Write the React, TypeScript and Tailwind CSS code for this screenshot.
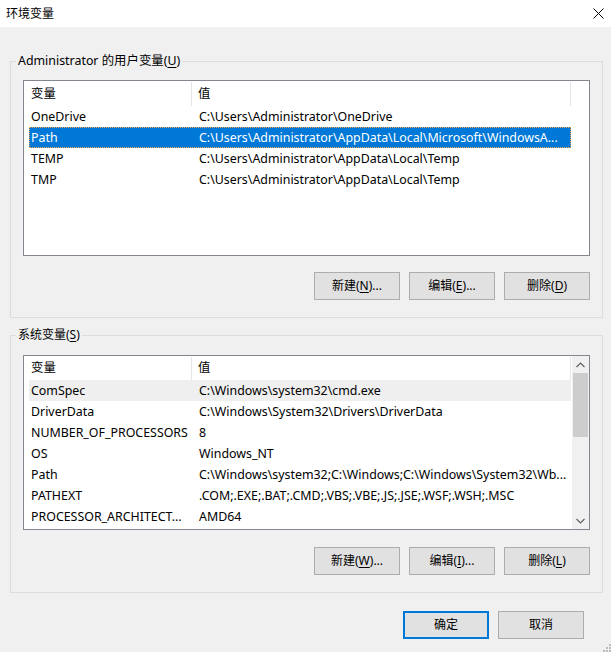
import React from "react";

type Row = { name: string; value: string };

const userVars: Row[] = [
  { name: "OneDrive", value: "C:\\Users\\Administrator\\OneDrive" },
  { name: "Path", value: "C:\\Users\\Administrator\\AppData\\Local\\Microsoft\\WindowsA..." },
  { name: "TEMP", value: "C:\\Users\\Administrator\\AppData\\Local\\Temp" },
  { name: "TMP", value: "C:\\Users\\Administrator\\AppData\\Local\\Temp" },
];

const sysVars: Row[] = [
  { name: "ComSpec", value: "C:\\Windows\\system32\\cmd.exe" },
  { name: "DriverData", value: "C:\\Windows\\System32\\Drivers\\DriverData" },
  { name: "NUMBER_OF_PROCESSORS", value: "8" },
  { name: "OS", value: "Windows_NT" },
  { name: "Path", value: "C:\\Windows\\system32;C:\\Windows;C:\\Windows\\System32\\Wb..." },
  { name: "PATHEXT", value: ".COM;.EXE;.BAT;.CMD;.VBS;.VBE;.JS;.JSE;.WSF;.WSH;.MSC" },
  { name: "PROCESSOR_ARCHITECT...", value: "AMD64" },
];

function Btn({ label, hot, tail, primary }: { label: string; hot?: string; tail?: string; primary?: boolean }) {
  return (
    <button
      className={
        primary
          ? "w-[86px] h-[28px] border-2 border-[#0078d7] bg-[#e1e1e1] text-[12px] leading-none text-black"
          : "w-[86px] h-[28px] border border-[#adadad] bg-[#e1e1e1] text-[12px] leading-none text-black"
      }
    >
      {label}
      {hot && (
        <>
          (<span className="underline underline-offset-2">{hot}</span>){tail}
        </>
      )}
    </button>
  );
}

function ListView({
  rows,
  selected,
  hover,
  headerH,
  scroll,
  height,
}: {
  rows: Row[];
  selected?: number;
  hover?: number;
  headerH: string;
  scroll?: boolean;
  height: string;
}) {
  return (
    <div className={`flex border border-[#828790] bg-white text-[12.4px] ${height}`}>
      <div className="flex-1 min-w-0 pl-[5px]">
        <div className={`flex w-[542px] ${headerH}`}>
          <div className="w-[163px] pl-[2px] flex items-center border-r border-[#e5e5e5] mt-[1px]">变量</div>
          <div className="flex-1 pl-[6px] flex items-center border-r border-[#e5e5e5] mt-[1px]">值</div>
        </div>
        {rows.map((r, i) => {
          const sel = i === selected;
          const hov = i === hover;
          return (
            <div
              key={r.name}
              className={
                sel
                  ? "flex w-[542px] h-[21px] pt-[2px] items-center bg-[#0078d7] text-white outline outline-1 outline-dotted outline-[#f7a34b] -outline-offset-1"
                  : hov
                    ? "flex w-[542px] h-[21px] pt-[2px] items-center bg-[#efefef]"
                    : "flex w-[542px] h-[21px] pt-[2px] items-center"
              }
            >
              <div className="w-[168px] pl-[2px] whitespace-nowrap overflow-hidden">{r.name}</div>
              <div className="flex-1 pl-[2px] whitespace-nowrap overflow-hidden">{r.value}</div>
            </div>
          );
        })}
      </div>
      {scroll && (
        <div className="w-[17px] bg-[#f0f0f0] flex flex-col">
          <div className="h-[17px] flex items-center justify-center">
            <svg width="9" height="6" viewBox="0 0 9 6">
              <path d="M0.5 5 L4.5 1 L8.5 5" stroke="#606060" strokeWidth="1.2" fill="none" />
            </svg>
          </div>
          <div className="h-[64px] mx-[1px] bg-[#cdcdcd]" />
          <div className="flex-1" />
          <div className="h-[17px] flex items-center justify-center">
            <svg width="9" height="6" viewBox="0 0 9 6">
              <path d="M0.5 1 L4.5 5 L8.5 1" stroke="#606060" strokeWidth="1.2" fill="none" />
            </svg>
          </div>
        </div>
      )}
    </div>
  );
}

export default function App() {
  return (
    <div
      className="relative w-[611px] h-[652px] bg-[#f0f0f0] text-[12px] text-black flex flex-col overflow-hidden"
      style={{ fontFamily: '"Noto Sans", "Noto Sans CJK SC", sans-serif' }}
    >
      {/* title bar */}
      <div className="h-[27px] bg-white flex items-center justify-between pl-[6px] pr-[7px]">
        <span>环境变量</span>
        <svg width="11" height="11" viewBox="0 0 11 11">
          <path d="M0.5 0.5 L10.5 10.5 M10.5 0.5 L0.5 10.5" stroke="#000" strokeWidth="1" />
        </svg>
      </div>

      <div className="pl-[10px] pr-[8px]">
        {/* user vars */}
        <div className="mt-[34px] border border-[#dcdcdc] px-[12px] pb-[17px]">
          <div className="-mt-[9px] ml-[-7px] w-fit px-[2px] bg-[#f0f0f0] leading-[16px] text-[12.4px]">
            Administrator 的用户变量(<span className="underline underline-offset-2">U</span>)
          </div>
          <div className="mt-[11px]">
            <ListView rows={userVars} selected={1} headerH="h-[25px]" height="h-[176px]" />
          </div>
          <div className="mt-[16px] flex justify-end gap-[9px]">
            <Btn label="新建" hot="N" tail="..." />
            <Btn label="编辑" hot="E" tail="..." />
            <Btn label="删除" hot="D" />
          </div>
        </div>

        {/* system vars */}
        <div className="mt-[17px] border border-[#dcdcdc] px-[12px] pb-[17px]">
          <div className="-mt-[9px] ml-[-7px] w-fit px-[2px] bg-[#f0f0f0] leading-[16px]">
            系统变量(<span className="underline underline-offset-2">S</span>)
          </div>
          <div className="mt-[12px]">
            <ListView rows={sysVars} hover={0} headerH="h-[24px]" scroll height="h-[175px]" />
          </div>
          <div className="mt-[17px] flex justify-end gap-[9px]">
            <Btn label="新建" hot="W" tail="..." />
            <Btn label="编辑" hot="I" tail="..." />
            <Btn label="删除" hot="L" />
          </div>
        </div>
      </div>

      <div className="mt-[18px] pr-[27px] flex justify-end gap-[9px]">
        <Btn label="确定" primary />
        <Btn label="取消" />
      </div>

      {/* size grip */}
      <svg className="absolute right-0 bottom-0" width="10" height="10" viewBox="0 0 10 10">
        <rect x="8" y="2" width="2" height="2" fill="#bcbcbc" />
        <rect x="5" y="5" width="2" height="2" fill="#bcbcbc" />
        <rect x="8" y="5" width="2" height="2" fill="#bcbcbc" />
        <rect x="2" y="8" width="2" height="2" fill="#bcbcbc" />
        <rect x="5" y="8" width="2" height="2" fill="#bcbcbc" />
        <rect x="8" y="8" width="2" height="2" fill="#bcbcbc" />
      </svg>
    </div>
  );
}
